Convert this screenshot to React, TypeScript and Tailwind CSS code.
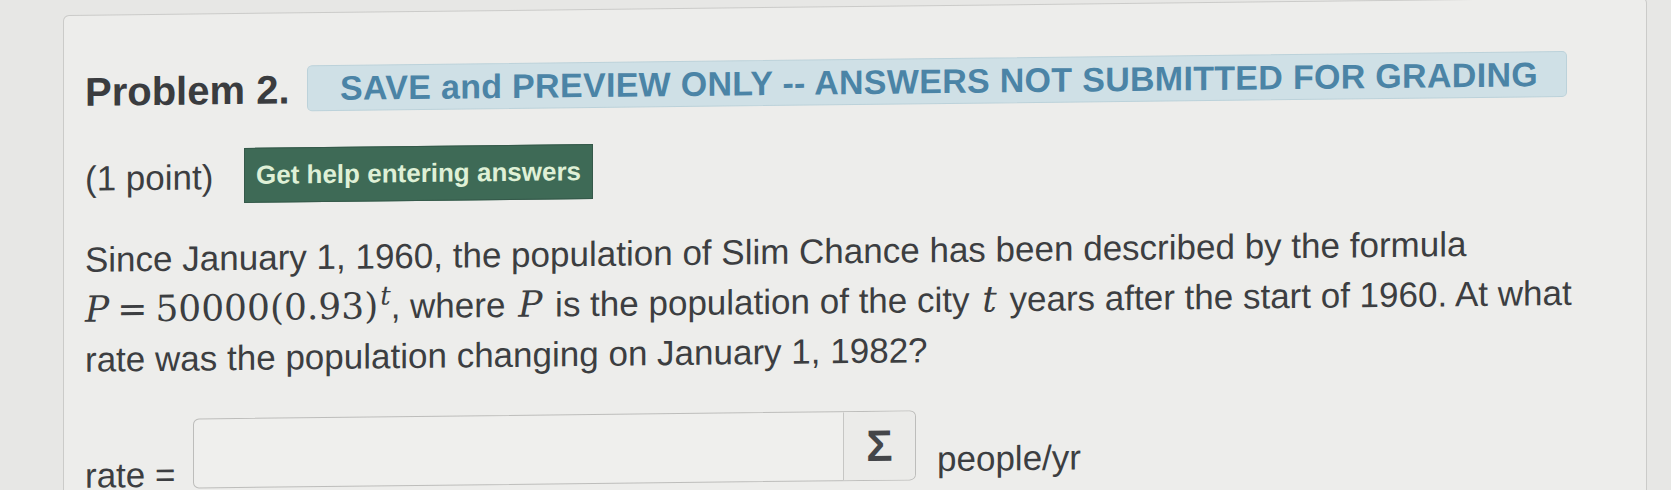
import React from "react";

const sans = { fontFamily: '"Liberation Sans", Arial, sans-serif' };

function MathVar({ children }: { children: React.ReactNode }) {
  return (
    <span className="font-['DejaVu_Serif',serif] italic text-[36px] leading-none mx-[3px]">{children}</span>
  );
}

export default function App() {
  return (
    <div
      className="w-[1671px] h-[490px] overflow-hidden bg-[#e7e7e5] pl-[63px] pt-[15px] font-['Liberation_Sans',Arial,sans-serif] text-[#3c3e41]"
      style={sans}
    >
      <div className="w-[1584px] h-[520px] border border-[#cbcbc9] rounded-[6px] bg-[#ededeb] pl-[21px] pt-[52px] origin-top-left -skew-y-[0.65deg]">
        {/* heading row */}
        <div className="flex items-start">
          <div className="w-[222px] mt-[4px] text-[40px] leading-[40px] font-bold text-[#3a3c3f]">Problem 2.</div>
          <div className="w-[1260px] h-[46px] flex items-center pl-[32px] border border-[#bcd2da] rounded-[5px] bg-[#cfe0e6]">
            <span className="text-[34px] leading-[34px] font-bold text-[#4b84a6] whitespace-nowrap tracking-[0.3px]">
              SAVE and PREVIEW ONLY -- ANSWERS NOT SUBMITTED FOR GRADING
            </span>
          </div>
        </div>

        {/* points + help */}
        <div className="flex items-start mt-[36px]">
          <div className="w-[159px] mt-[11px] text-[35px] leading-[35px]">(1 point)</div>
          <button className="w-[349px] h-[55px] flex items-center justify-center bg-[#3e6a56] border border-[#35594a] text-[#dff0d6] text-[26px] font-bold">
            Get help entering answers
          </button>
        </div>

        {/* problem text */}
        <p className="mt-[30px] text-[35px] leading-[50px] whitespace-nowrap">
          Since January 1, 1960, the population of Slim Chance has been described by the formula
          <br />
          <span className="font-['DejaVu_Serif',serif] text-[36px] leading-none">
            <span className="italic">P</span>
            <span className="mx-[8px]">=</span>
            50000(0.93)
            <sup className="italic text-[26px] -top-[14px] ml-[2px]">t</sup>
          </span>
          , where <MathVar>P</MathVar> is the population of the city <MathVar>t</MathVar> years after the start of 1960. At what
          <br />
          rate was the population changing on January 1, 1982?
        </p>

        {/* answer row */}
        <div className="flex items-start mt-[35px]">
          <div className="w-[108px] mt-[38px] text-[35px] leading-[35px] whitespace-nowrap">rate =</div>
          <div className="w-[723px] h-[70px] flex border border-[#bdbdbb] rounded-[6px] bg-[#efefed]">
            <div className="flex-1" />
            <div className="w-[72px] flex items-center justify-center border-l border-[#c6c6c4] rounded-r-[6px] bg-[#ebebe9]">
              <span className="text-[44px] leading-none font-bold text-[#444649]">Σ</span>
            </div>
          </div>
          <div className="ml-[21px] mt-[31px] text-[35px] leading-[35px]">people/yr</div>
        </div>
      </div>
    </div>
  );
}
